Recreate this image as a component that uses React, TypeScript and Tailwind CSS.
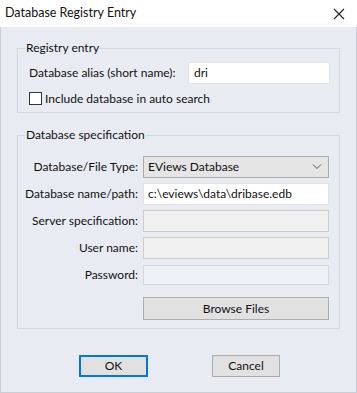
import React from 'react';

const font = { fontFamily: 'Lato, "Noto Sans", "Liberation Sans", sans-serif' };

// Labelled row in the "Database specification" group
const SpecRow = ({ label, children }: { label: string; children: React.ReactNode }) => (
  <div className="flex items-center h-[22px]">
    <span className="w-[121px] text-right pr-[5px] whitespace-nowrap">{label}</span>
    {children}
  </div>
);

const DisabledField = () => (
  <div className="w-[186px] h-[22px] bg-[#f0f0f0] border border-[#cccccc]" />
);

export default function App() {
  return (
    <div className="w-[357px] h-[393px] flex flex-col text-[12px] text-[#111] leading-none" style={font}>
      {/* title bar */}
      <div className="h-[27px] bg-white flex items-center justify-between pl-[5px] pr-[12px] shrink-0">
        <span className="text-[12.5px]">Database Registry Entry</span>
        <svg width="12" height="12" viewBox="0 0 12 12" className="text-[#222]">
          <path d="M1 1 L11 11 M11 1 L1 11" stroke="currentColor" strokeWidth="1.1" />
        </svg>
      </div>

      {/* body */}
      <div className="flex-1 bg-[#e8ecf2] border-l border-r border-b border-[#c9ced6] pt-[13px] px-[16px] flex flex-col">
        <fieldset className="border border-[#d2d8df] pl-[11px] pr-[9px] pb-[8px] h-[73px]">
          <legend className="px-[1px] -ml-[4px] leading-[16px]">Registry entry</legend>
          <div className="flex items-center justify-between mt-[6px]">
            <span className="whitespace-nowrap">Database alias (short name):</span>
            <div className="w-[142px] h-[22px] bg-white border border-[#e3e3e3] flex items-center pl-[5px]">dri</div>
          </div>
          <label className="flex items-center mt-[8px] gap-[3px]">
            <span className="w-[13px] h-[13px] border border-[#333] bg-white inline-block" />
            <span className="whitespace-nowrap">Include database in auto search</span>
          </label>
        </fieldset>

        <fieldset className="border border-[#d2d8df] pl-[4px] pr-[10px] mt-[14px] h-[202px]">
          <legend className="px-[1px] ml-[3px] leading-[16px]">Database specification</legend>
          <div className="flex flex-col gap-[5px] mt-[13px]">
            <SpecRow label="Database/File Type:">
              <div className="w-[186px] h-[22px] bg-[#e5e5e5] border border-[#adadad] flex items-center justify-between pl-[4px] pr-[6px]">
                <span>EViews Database</span>
                <svg width="10" height="6" viewBox="0 0 10 6">
                  <path d="M1 0.5 L5 4.5 L9 0.5" fill="none" stroke="#555" strokeWidth="1" />
                </svg>
              </div>
            </SpecRow>
            <SpecRow label="Database name/path:">
              <div className="w-[186px] h-[22px] bg-white border border-[#e3e3e3] flex items-center pl-[4px] whitespace-nowrap">
                c:\eviews\data\dribase.edb
              </div>
            </SpecRow>
            <SpecRow label="Server specification:">
              <DisabledField />
            </SpecRow>
            <SpecRow label="User name:">
              <DisabledField />
            </SpecRow>
            <SpecRow label="Password:">
              <div className="w-[186px] h-[20px] bg-[#edf1f5] border border-[#d4d8dc]" />
            </SpecRow>
          </div>
          <div className="flex mt-[11px] pl-[121px]">
            <button className="w-[186px] h-[23px] bg-[#e1e1e1] border border-[#adadad] text-[12px]">Browse Files</button>
          </div>
        </fieldset>

        <div className="flex mt-[26px] pl-[62px] gap-[64px]">
          <button className="w-[69px] h-[22px] bg-[#e1e1e1] border-2 border-[#0078d7] text-[12px]">OK</button>
          <button className="w-[68px] h-[22px] bg-[#e1e1e1] border border-[#adadad] text-[12px]">Cancel</button>
        </div>
      </div>
    </div>
  );
}
